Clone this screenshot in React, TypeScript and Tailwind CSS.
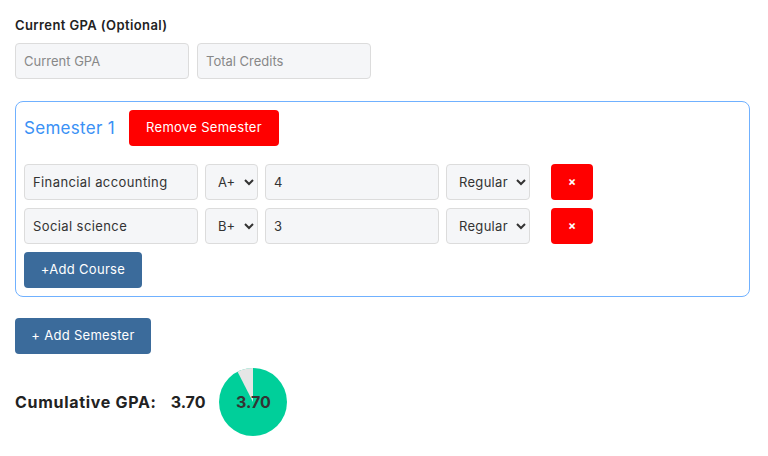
import { useState } from 'react';

interface Course {
  name: string;
  grade: string;
  credits: string;
  type: string;
}

const grades = ['A+', 'A', 'A-', 'B+', 'B', 'B-', 'C+', 'C', 'C-', 'D', 'F'];

const fieldCls =
  'h-9 rounded border border-[#dcdcdc] bg-[#f5f6f8] text-[13px] text-[#333] outline-none';

function GpaPie({ value }: { value: number }) {
  const r = 34;
  const frac = value / 4;
  const angle = (1 - frac) * 2 * Math.PI;
  const x = r - r * Math.sin(angle);
  const y = r - r * Math.cos(angle);
  return (
    <div className="relative h-[68px] w-[68px]">
      <svg width="68" height="68" viewBox="0 0 68 68">
        <circle cx="34" cy="34" r="34" fill="#00cf9a" />
        <path d={`M34 34 L${x} ${y} A34 34 0 0 1 34 0 Z`} fill="#e6e6e6" />
      </svg>
      <span className="absolute inset-0 flex items-center justify-center text-[16px] font-bold text-[#333]">
        {value.toFixed(2)}
      </span>
    </div>
  );
}

export default function App() {
  const [courses] = useState<Course[]>([
    { name: 'Financial accounting', grade: 'A+', credits: '4', type: 'Regular' },
    { name: 'Social science', grade: 'B+', credits: '3', type: 'Regular' },
  ]);

  return (
    <div className="min-h-screen bg-white px-[15px] pt-4 font-['Inter',sans-serif] text-[#333]">
      <p className="mb-[9px] text-[13px] font-semibold leading-[18px] tracking-[0.4px] text-[#222]">
        Current GPA (Optional)
      </p>
      <div className="flex gap-2">
        <input className={`${fieldCls} w-[174px] px-2 placeholder:text-[#888]`} placeholder="Current GPA" />
        <input className={`${fieldCls} w-[174px] px-2 placeholder:text-[#888]`} placeholder="Total Credits" />
      </div>

      <div className="mt-[22px] w-[735px] rounded-lg border border-[#70b1ff] p-2">
        <div className="flex items-center gap-[14px]">
          <h2 className="text-[17px] leading-6 tracking-[0.3px] text-[#3a91f5]">Semester 1</h2>
          <button className="h-9 w-[150px] rounded bg-[#ff0000] text-[13px] tracking-[0.3px] text-white">
            Remove Semester
          </button>
        </div>
        <div className="mt-[18px] flex flex-col gap-2">
          {courses.map((c, i) => (
            <div key={i} className="flex items-center gap-[7px]">
              <input className={`${fieldCls} w-[174px] px-2 tracking-[0.4px]`} defaultValue={c.name} />
              <select className={`${fieldCls} w-[53px] pl-2`} defaultValue={c.grade}>
                {grades.map((g) => (
                  <option key={g}>{g}</option>
                ))}
              </select>
              <input className={`${fieldCls} w-[174px] px-2`} defaultValue={c.credits} />
              <select className={`${fieldCls} w-[84px] pl-2 tracking-[0.3px]`} defaultValue={c.type}>
                <option>Regular</option>
                <option>Honors</option>
                <option>AP</option>
              </select>
              <button className="ml-[14px] h-9 w-[42px] rounded bg-[#ff0000] text-[12px] font-bold text-white">
                ×
              </button>
            </div>
          ))}
        </div>
        <button className="mt-2 h-9 w-[118px] rounded bg-[#3b6b9b] text-[13px] tracking-[0.3px] text-white">
          +Add Course
        </button>
      </div>

      <button className="mt-[21px] h-9 w-[136px] rounded bg-[#3b6b9b] text-[13px] tracking-[0.3px] text-white">
        + Add Semester
      </button>

      <div className="mt-[14px] flex items-center">
        <span className="text-[16px] font-bold tracking-[0.7px] text-[#222]">Cumulative GPA:</span>
        <span className="ml-[14px] text-[16px] font-bold text-[#222]">3.70</span>
        <div className="ml-[14px]">
          <GpaPie value={3.7} />
        </div>
      </div>
    </div>
  );
}
